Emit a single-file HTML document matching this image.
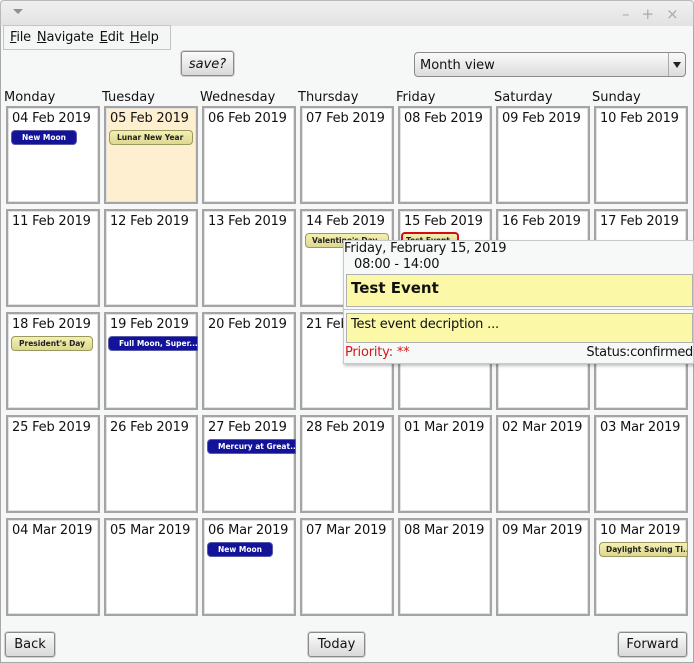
<!DOCTYPE html>
<html><head><style>
*{margin:0;padding:0;box-sizing:border-box}
body{width:694px;height:663px;overflow:hidden;background:#f6f7f7;font-family:"DejaVu Sans","Liberation Sans",sans-serif;position:relative;color:#111}
.abs{position:absolute}
.title{left:0;top:0;width:694px;height:26px;background:linear-gradient(#f0f0f0,#e2e2e2);border:1px solid #b8b8b8;border-bottom:none;border-radius:4px 4px 0 0}
.frame{left:0;top:26px;width:694px;height:637px;border:1px solid #a8a8a8;border-top:none}
.menu{left:3px;top:25px;width:168px;height:25px;border:1px solid #c4c4c4;background:#f4f5f5;font-size:13px;padding:4px 0 0 6px;word-spacing:2px;letter-spacing:-0.2px}
.menu u{text-decoration:underline}
.btn{border:1px solid #8a8a8a;border-radius:3px;background:linear-gradient(#fbfbfb,#d9d9d9);font-size:13px;text-align:center;box-shadow:0 0 0 1px #d0d0d0}
.day{font-size:13px;top:90px}
.cell{width:94px;height:98px;background:#fff;border:2px solid #a4a4a4;box-shadow:inset 0 0 0 1px #e2e2e2;font-size:13px;padding:3px 0 0 4px;letter-spacing:-0.2px}
.pill{height:15px;border-radius:4px;font-size:7.5px;font-weight:bold;padding-left:10px;line-height:14px;white-space:nowrap;overflow:hidden;letter-spacing:0}
.blue{background:#13139a;color:#fff;border:1px solid #5a5aa8}
.yel{background:linear-gradient(#f4f0b0,#ddd890);color:#222;border:1px solid #9a9a60}
</style></head><body>
<div class="abs title"></div>
<div class="abs" style="left:13px;top:9px;width:0;height:0;border-left:5px solid transparent;border-right:5px solid transparent;border-top:5px solid #909090"></div>
<div class="abs" style="left:622px;top:5px;font-size:15px;color:#aaa;letter-spacing:12px">–+×</div>
<div class="abs frame"></div>
<div class="abs menu"><u>F</u>ile <u>N</u>avigate <u>E</u>dit <u>H</u>elp</div>
<div class="abs btn" style="left:181px;top:51px;width:53px;height:25px;font-style:italic;line-height:25px">save?</div>
<div class="abs" style="left:414px;top:52px;width:272px;height:25px;border:1px solid #8a8a8a;border-radius:4px;background:linear-gradient(#fafafa,#dcdcdc);font-size:13px;padding:5px 0 0 5px">Month view<div class="abs" style="right:0;top:0;width:17px;height:23px;border-left:1px solid #aaa"><div class="abs" style="left:4px;top:9px;border-left:4px solid transparent;border-right:4px solid transparent;border-top:6px solid #222"></div></div></div>
<div class="abs day" style="left:4px">Monday</div>
<div class="abs day" style="left:102px">Tuesday</div>
<div class="abs day" style="left:200px">Wednesday</div>
<div class="abs day" style="left:298px">Thursday</div>
<div class="abs day" style="left:396px">Friday</div>
<div class="abs day" style="left:494px">Saturday</div>
<div class="abs day" style="left:592px">Sunday</div>

<div class="abs cell" style="left:6px;top:106px">04 Feb 2019</div>
<div class="abs cell" style="left:104px;top:106px;background:#fdefd0">05 Feb 2019</div>
<div class="abs cell" style="left:202px;top:106px">06 Feb 2019</div>
<div class="abs cell" style="left:300px;top:106px">07 Feb 2019</div>
<div class="abs cell" style="left:398px;top:106px">08 Feb 2019</div>
<div class="abs cell" style="left:496px;top:106px">09 Feb 2019</div>
<div class="abs cell" style="left:594px;top:106px">10 Feb 2019</div>

<div class="abs cell" style="left:6px;top:209px">11 Feb 2019</div>
<div class="abs cell" style="left:104px;top:209px">12 Feb 2019</div>
<div class="abs cell" style="left:202px;top:209px">13 Feb 2019</div>
<div class="abs cell" style="left:300px;top:209px">14 Feb 2019</div>
<div class="abs cell" style="left:398px;top:209px">15 Feb 2019</div>
<div class="abs cell" style="left:496px;top:209px">16 Feb 2019</div>
<div class="abs cell" style="left:594px;top:209px">17 Feb 2019</div>

<div class="abs cell" style="left:6px;top:312px">18 Feb 2019</div>
<div class="abs cell" style="left:104px;top:312px">19 Feb 2019</div>
<div class="abs cell" style="left:202px;top:312px">20 Feb 2019</div>
<div class="abs cell" style="left:300px;top:312px">21 Feb 2019</div>
<div class="abs cell" style="left:398px;top:312px">22 Feb 2019</div>
<div class="abs cell" style="left:496px;top:312px">23 Feb 2019</div>
<div class="abs cell" style="left:594px;top:312px">24 Feb 2019</div>

<div class="abs cell" style="left:6px;top:415px">25 Feb 2019</div>
<div class="abs cell" style="left:104px;top:415px">26 Feb 2019</div>
<div class="abs cell" style="left:202px;top:415px">27 Feb 2019</div>
<div class="abs cell" style="left:300px;top:415px">28 Feb 2019</div>
<div class="abs cell" style="left:398px;top:415px">01 Mar 2019</div>
<div class="abs cell" style="left:496px;top:415px">02 Mar 2019</div>
<div class="abs cell" style="left:594px;top:415px">03 Mar 2019</div>

<div class="abs cell" style="left:6px;top:518px">04 Mar 2019</div>
<div class="abs cell" style="left:104px;top:518px">05 Mar 2019</div>
<div class="abs cell" style="left:202px;top:518px">06 Mar 2019</div>
<div class="abs cell" style="left:300px;top:518px">07 Mar 2019</div>
<div class="abs cell" style="left:398px;top:518px">08 Mar 2019</div>
<div class="abs cell" style="left:496px;top:518px">09 Mar 2019</div>
<div class="abs cell" style="left:594px;top:518px">10 Mar 2019</div>

<div class="abs pill blue" style="left:11px;top:130px;width:66px">New Moon</div>
<div class="abs pill yel" style="left:109px;top:130px;width:84px;padding-left:7px">Lunar New Year</div>
<div class="abs pill yel" style="left:305px;top:233px;width:84px;padding-left:6px">Valentine's Day</div>
<div class="abs pill yel" style="left:401px;top:232px;width:58px;border:2px solid #d01010;padding-left:3px">Test Event</div>
<div class="abs pill yel" style="left:11px;top:336px;width:82px;padding-left:7px">President's Day</div>
<div class="abs pill blue" style="left:108px;top:336px;width:90px;border-radius:4px 0 0 4px">Full Moon, Super...</div>
<div class="abs pill blue" style="left:207px;top:439px;width:89px;border-radius:4px 0 0 4px">Mercury at Great...</div>
<div class="abs pill blue" style="left:207px;top:542px;width:66px">New Moon</div>
<div class="abs pill yel" style="left:599px;top:542px;width:89px;padding-left:6px;border-radius:4px 0 0 4px">Daylight Saving Ti...</div>

<div class="abs" style="left:343px;top:240px;width:351px;height:124px;background:#f7f8f8;border:1px solid #c8c8c8;box-shadow:1px 2px 3px rgba(0,0,0,0.25)">
 <div class="abs" style="left:0;top:0;font-size:13px;letter-spacing:-0.2px">Friday, February 15, 2019</div>
 <div class="abs" style="left:10px;top:16px;font-size:13px;letter-spacing:-0.2px">08:00 - 14:00</div>
 <div class="abs" style="left:2px;top:33px;width:347px;height:33px;background:#fbf8a8;border:1px solid #b0b0b0;font-size:15px;font-weight:bold;padding:4px 0 0 4px">Test Event</div>
 <div class="abs" style="left:0;top:68px;width:351px;border-top:1px solid #c0c0c0"></div>
 <div class="abs" style="left:2px;top:72px;width:347px;height:30px;background:#fbf8a8;border:1px solid #b0b0b0;font-size:13px;padding:3px 0 0 4px;letter-spacing:-0.2px">Test event decription ...</div>
 <div class="abs" style="left:1px;top:104px;font-size:13px;color:#d01818;letter-spacing:-0.2px">Priority: **</div>
 <div class="abs" style="right:0;top:104px;font-size:13px;letter-spacing:-0.3px">Status:confirmed</div>
</div>

<div class="abs btn" style="left:5px;top:632px;width:50px;height:25px;line-height:24px">Back</div>
<div class="abs btn" style="left:308px;top:632px;width:57px;height:25px;line-height:24px">Today</div>
<div class="abs btn" style="left:618px;top:632px;width:69px;height:25px;line-height:24px">Forward</div>
</body></html>
